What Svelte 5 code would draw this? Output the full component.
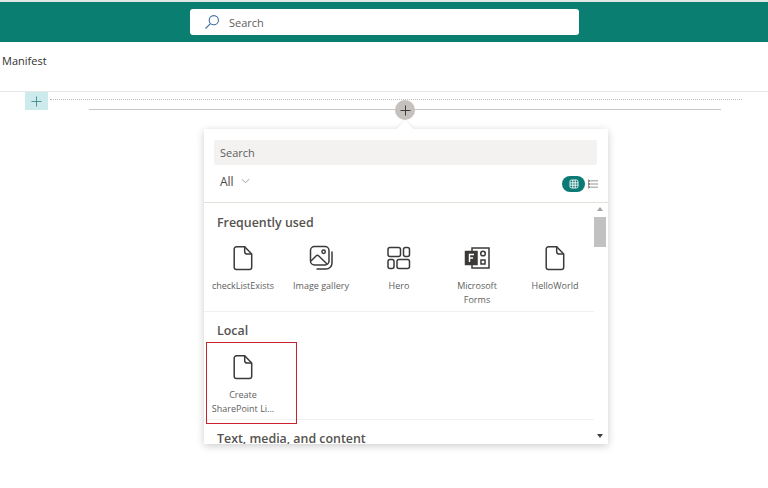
<script>
  const frequent = [
    { label: "checkListExists", icon: "file" },
    { label: "Image gallery", icon: "gallery" },
    { label: "Hero", icon: "hero" },
    { label: "Microsoft Forms", icon: "forms" },
    { label: "HelloWorld", icon: "file" }
  ];
</script>

{#snippet fileIcon()}
  <svg class="icon" viewBox="0 0 28 28" fill="none" stroke="#3b3a39" stroke-width="1.5">
    <path d="M7.5 2.8h8.2l7 7.2v13.2a2.3 2.3 0 0 1-2.3 2.3H7.5a2.3 2.3 0 0 1-2.3-2.3V5.1a2.3 2.3 0 0 1 2.3-2.3z" />
    <path d="M15.7 2.8v5a2.2 2.2 0 0 0 2.2 2.2h4.8" />
  </svg>
{/snippet}

{#snippet galleryIcon()}
  <svg class="icon" viewBox="0 0 28 28" fill="none" stroke="#3b3a39" stroke-width="1.5">
    <rect x="3.5" y="2.5" width="18.5" height="18.5" rx="4" />
    <circle cx="16.6" cy="7.8" r="1.7" />
    <path d="M4 17l5-5a2 2 0 0 1 2.8 0l8.5 8.3" />
    <path d="M25 7.5v11.5a6 6 0 0 1-6 6H9.5" />
  </svg>
{/snippet}

{#snippet heroIcon()}
  <svg class="icon" viewBox="0 0 28 28" fill="none" stroke="#3b3a39" stroke-width="1.5">
    <rect x="3" y="3.5" width="12.5" height="9" rx="2" />
    <rect x="18.5" y="3.5" width="6" height="9" rx="2" />
    <rect x="3" y="15.5" width="6" height="9" rx="2" />
    <rect x="12" y="15.5" width="12.5" height="9" rx="2" />
  </svg>
{/snippet}

{#snippet formsIcon()}
  <svg class="icon" viewBox="0 0 28 28" fill="none" stroke="#3b3a39" stroke-width="1.5">
    <rect x="9" y="4" width="17" height="20" />
    <circle cx="20" cy="9.5" r="2.3" />
    <rect x="18" y="16" width="4" height="4" />
    <rect x="2.5" y="7.5" width="11.5" height="13" fill="#3b3a39" />
    <path d="M6.5 18v-7.5h4.5M6.5 14h3.6" stroke="#fff" stroke-width="1.4" />
  </svg>
{/snippet}

{#snippet tile(label, icon)}
  {#if icon === "gallery"}
    {@render galleryIcon()}
  {:else if icon === "hero"}
    {@render heroIcon()}
  {:else if icon === "forms"}
    {@render formsIcon()}
  {:else}
    {@render fileIcon()}
  {/if}
  <span class="tile-label">{label}</span>
{/snippet}

<div class="page">
  <header class="suitebar">
    <div class="suite-search">
      <svg class="search-icon" viewBox="0 0 16 16" fill="none" stroke="#3f6f9e" stroke-width="1.1">
        <circle cx="9.8" cy="6.2" r="4.6" />
        <path d="M6.4 9.6L1.5 14.5" />
      </svg>
      <span>Search</span>
    </div>
  </header>

  <div class="titlebar">Manifest</div>

  <main class="canvas">
    <div class="section-row">
      <button class="section-add" aria-label="Add section">
        <svg viewBox="0 0 12 12" stroke="#3f8b8e" stroke-width="1"><path d="M6 .5v11M.5 6h11" /></svg>
      </button>
      <div class="dotted"></div>
    </div>

    <div class="zone-line"></div>
    <button class="part-add" aria-label="Add web part">
      <svg viewBox="0 0 12 12" stroke="#323130" stroke-width="1"><path d="M6 .5v11M.5 6h11" /></svg>
    </button>

    <div class="toolbox">
      <div class="beak"></div>
      <div class="tool-head">
        <div class="tool-search">Search</div>
        <div class="filter-row">
          <div class="filter">
            All
            <svg viewBox="0 0 10 6" fill="none" stroke="#8a8886" stroke-width="0.9"><path d="M1 1l4 4 4-4" /></svg>
          </div>
          <div class="views">
            <span class="view-on">
              <svg viewBox="0 0 10 10" fill="none" stroke="#fff" stroke-width="0.9">
                <rect x="1" y="1" width="8" height="8" rx="1.6" />
                <path d="M3.8 1v8M6.2 1v8M1 3.8h8M1 6.2h8" />
              </svg>
            </span>
            <svg class="view-list" viewBox="0 0 11 10" fill="none" stroke="#8a8886" stroke-width="1">
              <path d="M.5 0v10M3 1.5h8M3 5h8M3 8.5h8" />
              <path d="M.5 1.5h2M.5 5h2M.5 8.5h2" stroke-width="2" />
            </svg>
          </div>
        </div>
      </div>

      <div class="tool-body">
        <div class="tool-list">
          <section class="group">
            <h3>Frequently used</h3>
            <div class="tiles">
              {#each frequent as item}
                <div class="tile">{@render tile(item.label, item.icon)}</div>
              {/each}
            </div>
          </section>
          <section class="group local">
            <h3>Local</h3>
            <div class="tiles">
              <div class="tile">{@render tile("Create SharePoint Li...", "file")}</div>
            </div>
          </section>
          <section class="group">
            <h3>Text, media, and content</h3>
          </section>
        </div>
        <div class="scrollbar">
          <div class="arrow up"></div>
          <div class="thumb"></div>
          <div class="arrow down"></div>
        </div>
      </div>

      <div class="highlight"></div>
    </div>
  </main>
</div>

<style>
  :global(body) {
    margin: 0;
    background: #fff;
  }

  .page {
    width: 768px;
    height: 488px;
    overflow: hidden;
    font-family: "Open Sans", "Noto Sans", sans-serif;
    color: #323130;
  }

  .suitebar {
    height: 40px;
    margin-top: 2px;
    background: #0a7f71;
    display: flex;
    justify-content: center;
    box-shadow: 0 -2px 0 #dfe6e4;
  }

  .suite-search {
    width: 389px;
    height: 26px;
    margin: 7px 0 0 1px;
    background: #fff;
    border-radius: 3px;
    display: flex;
    align-items: center;
    gap: 9px;
    padding-left: 14px;
    box-sizing: border-box;
    font-size: 11px;
    color: #605e5c;
  }

  .search-icon {
    width: 16px;
    height: 16px;
  }

  .titlebar {
    height: 50px;
    border-bottom: 1px solid #e8e8e8;
    padding: 11px 0 0 2px;
    box-sizing: border-box;
    font-size: 11px;
    line-height: 16px;
  }

  .canvas {
    position: relative;
    height: 396px;
  }

  .section-row {
    display: flex;
    align-items: center;
    height: 18px;
    padding: 0 26px 0 25px;
    gap: 2px;
  }

  .section-add {
    width: 23px;
    height: 18px;
    padding: 0;
    border: 0;
    background: #cdeaec;
    display: flex;
    align-items: center;
    justify-content: center;
  }

  .section-add svg {
    width: 11px;
    height: 11px;
  }

  .dotted {
    flex: 1;
    margin-top: -3px;
    border-top: 1px dotted #bdbdbd;
  }

  .zone-line {
    height: 1px;
    margin: -1px 47px 0 89px;
    background: #c8c6c4;
  }

  .part-add {
    position: absolute;
    left: 395px;
    top: 8px;
    width: 20px;
    height: 20px;
    padding: 0;
    border: 0;
    border-radius: 50%;
    background: #c4c1be;
    display: flex;
    align-items: center;
    justify-content: center;
  }

  .part-add svg {
    width: 11px;
    height: 11px;
  }

  .toolbox {
    position: absolute;
    left: 204px;
    top: 37px;
    width: 404px;
    height: 315px;
    background: #fff;
    box-shadow: 0 2px 8px rgba(0, 0, 0, 0.2);
  }

  .beak {
    position: absolute;
    left: 195px;
    top: -6px;
    width: 12px;
    height: 12px;
    background: #fff;
    transform: rotate(45deg);
    box-shadow: -1px -1px 3px rgba(0, 0, 0, 0.06);
  }

  .tool-head {
    position: relative;
    height: 74px;
    padding: 11px 11px 0 10px;
    box-sizing: border-box;
    border-bottom: 1px solid #e6e1d8;
  }

  .tool-search {
    height: 25px;
    background: #f3f2f1;
    border-radius: 2px;
    padding-left: 6px;
    font-size: 11px;
    line-height: 25px;
    color: #605e5c;
  }

  .filter-row {
    display: flex;
    align-items: center;
    justify-content: space-between;
    height: 32px;
    padding: 0 0 0 6px;
  }

  .filter {
    display: flex;
    align-items: center;
    gap: 7px;
    font-size: 12px;
    color: #484644;
  }

  .filter svg {
    width: 9px;
    height: 6px;
  }

  .views {
    display: flex;
    align-items: center;
    gap: 3px;
    margin-top: 5px;
    margin-right: -1px;
  }

  .view-on {
    width: 23px;
    height: 16px;
    border-radius: 8px;
    background: #0b7a75;
    display: flex;
    align-items: center;
    justify-content: center;
  }

  .view-on svg {
    width: 10px;
    height: 10px;
  }

  .view-list {
    width: 10px;
    height: 10px;
  }

  .tool-body {
    display: flex;
    height: 241px;
    overflow: hidden;
  }

  .tool-list {
    flex: 1;
    min-width: 0;
  }

  .group {
    border-bottom: 1px solid #f0f0f0;
  }

  .group:last-child {
    border-bottom: 0;
  }

  .group h3 {
    margin: 0;
    padding: 10px 0 0 13px;
    font-size: 12.4px;
    line-height: 17px;
    font-weight: 600;
    color: #55534f;
  }

  .group:first-child h3 {
    padding-top: 11px;
  }

  .tiles {
    display: flex;
  }

  .group:first-child .tiles {
    padding: 13px 0 0;
    height: 67px;
  }

  .local .tiles {
    padding: 14px 0 0;
    height: 66px;
  }

  .tile {
    width: 78px;
    box-sizing: border-box;
    padding: 0 6px;
    display: flex;
    flex-direction: column;
    align-items: center;
    text-align: center;
  }

  .icon {
    width: 28px;
    height: 28px;
    flex: none;
  }

  .tile-label {
    margin-top: 7px;
    font-size: 9px;
    line-height: 14px;
    color: #605e5c;
  }

  .scrollbar {
    width: 12px;
    margin-right: 2px;
    flex: none;
    display: flex;
    flex-direction: column;
    padding-top: 4px;
  }

  .arrow {
    width: 0;
    height: 0;
    margin: 0 auto;
    border-left: 3px solid transparent;
    border-right: 3px solid transparent;
  }

  .arrow.up {
    border-bottom: 4px solid #a3a3a3;
  }

  .arrow.down {
    margin-top: auto;
    margin-bottom: 6px;
    border-top: 4px solid #404040;
  }

  .thumb {
    height: 30px;
    margin-top: 6px;
    background: #c1c1c1;
  }

  .highlight {
    position: absolute;
    left: 2px;
    top: 213px;
    width: 89px;
    height: 80px;
    border: 1.5px solid #c8232c;
    pointer-events: none;
  }
</style>
